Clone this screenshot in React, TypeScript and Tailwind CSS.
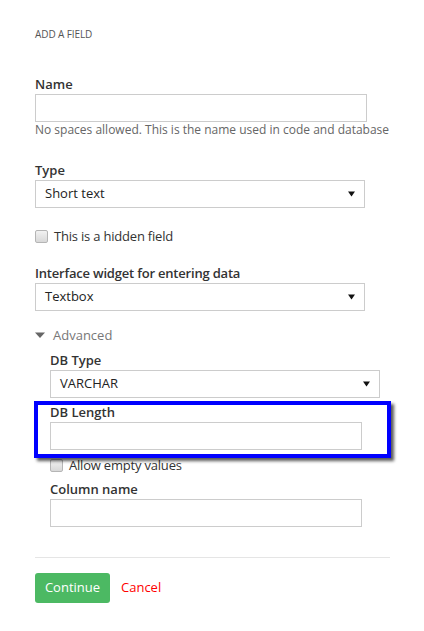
import React from "react";

const font = { fontFamily: '"Open Sans", "Liberation Sans", sans-serif' };

function Select({ value, width }: { value: string; width: string }) {
  return (
    <div className={`h-[28px] ${width} border border-[#cccccc] bg-white flex items-center justify-between pl-[9px] pr-[9px]`}>
      <span className="text-[13px] text-[#222]">{value}</span>
      <svg width="7" height="6" viewBox="0 0 7 6"><path d="M0 0.5 H7 L3.5 5.5 Z" fill="#111" /></svg>
    </div>
  );
}

function Checkbox({ label }: { label: string }) {
  return (
    <div className="h-[16px] flex items-center">
      <span className="w-[13px] h-[13px] rounded-[2px] border border-[#b5b5b5] bg-gradient-to-b from-[#f2f2f2] to-[#d8d8d8]" />
      <span className="ml-[6px] text-[13px] text-[#333] leading-[16px] tracking-[-0.2px]">{label}</span>
    </div>
  );
}

export default function App() {
  return (
    <div className="w-[424px] h-[631px] bg-white relative" style={font}>
      <div className="pl-[35px]">
        <div className="pt-[26px] h-[42px] text-[10px] leading-[16px] text-[#555] tracking-[-0.1px]">ADD A FIELD</div>

        <div className="mt-[32px] h-[20px] text-[13px] leading-[20px] font-semibold text-[#333]">Name</div>
        <div className="h-[28px] w-[332px] border border-[#cccccc] bg-white" />
        <div className="h-[16px] text-[12px] leading-[16px] text-[#666] whitespace-nowrap">
          No spaces allowed. This is the name used in code and database
        </div>

        <div className="mt-[22px] h-[20px] text-[13px] leading-[20px] font-semibold text-[#333]">Type</div>
        <Select value="Short text" width="w-[330px]" />

        <div className="mt-[20px]">
          <Checkbox label="This is a hidden field" />
        </div>

        <div className="mt-[19px] h-[20px] text-[13px] leading-[20px] font-semibold text-[#333] tracking-[-0.2px]">Interface widget for entering data</div>
        <Select value="Textbox" width="w-[330px]" />

        <div className="mt-[14px] h-[20px] flex items-center">
          <svg width="10" height="7" viewBox="0 0 10 7"><path d="M0 0.5 H10 L5 6 Z" fill="#666" /></svg>
          <span className="ml-[8px] text-[13px] text-[#777] leading-[20px]">Advanced</span>
        </div>

        <div className="pl-[15px]">
          <div className="mt-[5px] h-[20px] text-[13px] leading-[20px] font-semibold text-[#333]">DB Type</div>
          <Select value="VARCHAR" width="w-[330px]" />

          <div className="mt-[4px] h-[20px] text-[13px] leading-[20px] font-semibold text-[#333]">DB Length</div>
          <div className="h-[28px] w-[312px] border border-[#cccccc] bg-white" />

          <div className="mt-[7px]">
            <Checkbox label="Allow empty values" />
          </div>

          <div className="mt-[6px] h-[20px] text-[13px] leading-[20px] font-semibold text-[#333]">Column name</div>
          <div className="h-[28px] w-[312px] border border-[#cccccc] bg-white" />
        </div>

        <div className="mt-[30px] h-px w-[355px] bg-[#e5e5e5]" />

        <div className="mt-[15px] flex items-center">
          <button className="h-[30px] w-[75px] rounded-[3px] bg-[#4cb963] text-white text-[13px]">Continue</button>
          <span className="ml-[11px] text-[13px] text-[#ff0000]">Cancel</span>
        </div>
      </div>

      <div className="absolute left-[34px] top-[401px] w-[357px] h-[57px] border-[4px] border-[#0000ff] shadow-[3px_3px_3px_rgba(0,0,0,0.65)] pointer-events-none" />
    </div>
  );
}
